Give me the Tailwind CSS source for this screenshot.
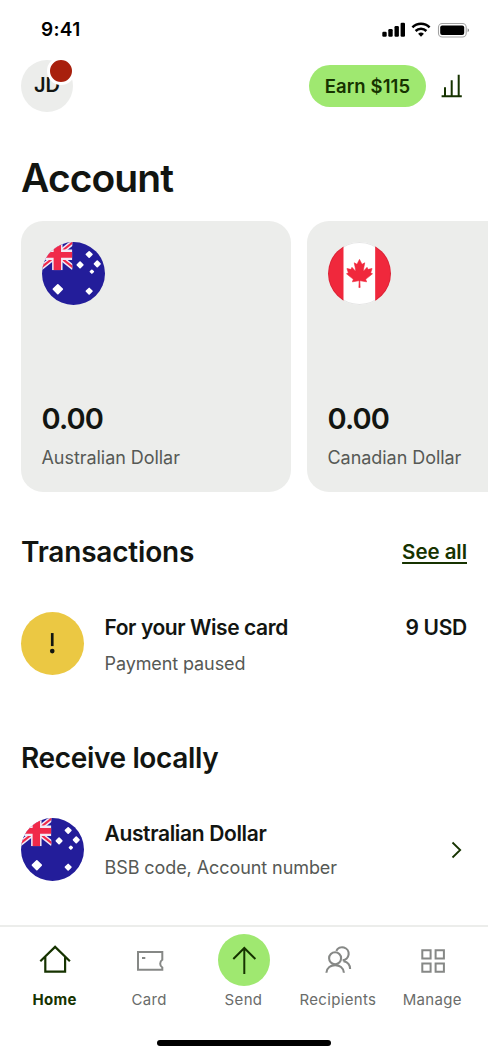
<!DOCTYPE html>
<html lang="en">
<head>
<meta charset="utf-8">
<meta name="viewport" content="width=device-width, initial-scale=1">
<title>Account</title>
<script src="https://cdn.jsdelivr.net/npm/@tailwindcss/browser@4"></script>
</head>
<body class="bg-white">
<svg class="hidden">
  <symbol id="flag-au" viewBox="0 0 187 187">
    <rect width="187" height="187" fill="#231d9a"/>
    <svg width="90" height="84">
      <path d="M-4 77L94-1M-4-1L94 77" stroke="#f3e9f5" stroke-width="15"/>
      <path d="M-4 77L94-1M-4-1L94 77" stroke="#f0294a" stroke-width="6"/>
      <path d="M45.500 0V84M0 38H90" stroke="#f3e9f5" stroke-width="31"/>
      <path d="M0 38H90" stroke="#f0294a" stroke-width="17"/>
      <path d="M45.500 0V84" stroke="#f0294a" stroke-width="22"/>
    </svg>
    <g fill="#fff" stroke="#fff" stroke-width="5" stroke-linejoin="round">
      <path d="M140 29l8 8-8 8-8-8zM164 57l8 8-8 8-8-8zM113 60l8 8-8 8-8-8zM148 84l4 4-4 4-4-4zM47 127l13 13-13 13-13-13zM140 138l8 8-8 8-8-8z"/>
    </g>
  </symbol>
</svg>
<div class="flex h-[1056px] w-[488px] flex-col overflow-hidden bg-white font-['Inter',sans-serif] text-[#121511]">

  <!-- Status bar -->
  <div class="flex h-[60px] shrink-0 items-center justify-between pl-[41px] pr-[19px]">
    <span class="text-[19px] font-semibold leading-6 tracking-[0.3px] text-black">9:41</span>
    <svg class="h-[18px] w-[88px]" viewBox="381 21 88 18" fill="none">
      <g fill="#000">
        <rect x="382.300" y="31.700" width="4.400" height="5" rx="1.200"/>
        <rect x="388.300" y="29" width="4.400" height="7.700" rx="1.200"/>
        <rect x="394.500" y="26" width="4.400" height="10.700" rx="1.200"/>
        <rect x="400.600" y="22.800" width="4.400" height="13.900" rx="1.200"/>
        <path d="M421 36.700l-2.900-2.900a4.200 4.200 0 0 1 5.800 0z"/>
      </g>
      <path d="M412.400 27.300a12.300 12.300 0 0 1 17.200 0M415.600 31a7.800 7.800 0 0 1 10.800 0" stroke="#000" stroke-width="2.500"/>
      <rect x="438.500" y="23.500" width="27.700" height="13.500" rx="3.800" stroke="#a3a3a3" stroke-width="1.100"/>
      <rect x="440.200" y="25.400" width="24" height="9.700" rx="2" fill="#000"/>
      <path d="M467.600 28.200c1.900.6 1.900 3.400 0 4z" fill="#8d8d8d"/>
    </svg>
  </div>

  <!-- Header -->
  <header class="flex h-[52px] shrink-0 items-center pl-[21px] pr-[24px]">
    <div class="relative flex size-[52px] items-center justify-center rounded-full bg-[#ecedeb]">
      <span class="mb-[2px] text-[20px] font-semibold leading-6 text-[#121511]">JD</span>
      <span class="absolute left-[26px] top-[-3px] size-[28px] rounded-full border-[3.500px] border-white bg-[#a8200d]"></span>
    </div>
    <button class="ml-auto flex h-[42px] w-[117px] items-center justify-center rounded-full bg-[#9fe870] text-[18.500px] font-semibold leading-6 tracking-[0.1px] text-[#163300]">Earn $115</button>
    <svg class="ml-[15px] h-[26px] w-[23px]" viewBox="441 73 23 26" fill="none" stroke="#163300" stroke-width="2">
      <path d="M441.600 96.200h20.200M445 87.300v9M451.700 80.300v16M458.700 74.800v21.500"/>
    </svg>
  </header>

  <h1 class="mt-[42px] h-[48px] shrink-0 pl-[21px] text-[39px] font-semibold leading-[48px] tracking-[-0.9px]">Account</h1>

  <!-- Balances -->
  <div class="mt-[19px] flex shrink-0 gap-4 overflow-hidden pl-[21px]">
    <section class="flex h-[271px] w-[270px] shrink-0 flex-col rounded-[22px] bg-[#ecedeb] pl-[20.500px] pt-[20.500px]">
      <svg class="size-[63px] rounded-full"><use href="#flag-au"/></svg>
      <p class="mt-[97px] text-[29px] font-semibold leading-[34px] tracking-[-0.9px]">0.00</p>
      <p class="mt-[10px] text-[18px] leading-6 tracking-[-0.050px] text-[#565955]">Australian Dollar</p>
    </section>
    <section class="flex h-[271px] w-[270px] shrink-0 flex-col rounded-[22px] bg-[#ecedeb] pl-[20.500px] pt-[20.500px]">
      <svg class="size-[63px] rounded-full" viewBox="0 0 187 187">
        <rect width="187" height="187" fill="#fff"/>
        <path d="M0 0h46v187H0zM140 0h47v187h-47z" fill="#f0283c"/>
        <circle cx="93.500" cy="93.500" r="92" fill="none" stroke="#000" stroke-opacity=".1" stroke-width="3"/>
        <path transform="translate(93.500 93) scale(.0207)" fill="#f0283c" stroke="#f0283c" stroke-width="90" d="M-90 2030l45-863a95 95 0 0 0-111-98l-859 151 116-320a65 65 0 0 0-20-73l-941-762 212-99a65 65 0 0 0 34-79l-186-572 542 115a65 65 0 0 0 73-38l105-247 423 454a65 65 0 0 0 111-57l-204-1052 327 189a65 65 0 0 0 91-27l332-652 332 652a65 65 0 0 0 91 27l327-189-204 1052a65 65 0 0 0 111 57l423-454 105 247a65 65 0 0 0 73 38l542-115-186 572a65 65 0 0 0 34 79l212 99-941 762a65 65 0 0 0-20 73l116 320-859-151a95 95 0 0 0-111 98l45 863z"/>
      </svg>
      <p class="mt-[97px] text-[29px] font-semibold leading-[34px] tracking-[-0.9px]">0.00</p>
      <p class="mt-[10px] text-[18px] leading-6 tracking-[-0.050px] text-[#565955]">Canadian Dollar</p>
    </section>
  </div>

  <!-- Transactions -->
  <div class="mt-[40px] flex h-10 shrink-0 items-center justify-between pl-[21px] pr-[21px]">
    <h2 class="text-[28px] font-semibold leading-10 tracking-[-0.2px]">Transactions</h2>
    <a class="text-[20.500px] font-semibold leading-6 tracking-[-0.050px] text-[#163300] underline decoration-2 underline-offset-[3px]">See all</a>
  </div>
  <div class="mt-[40px] flex h-[63px] shrink-0 pl-[21px] pr-[21px]">
    <div class="size-[62.500px] shrink-0 rounded-full bg-[#ebc843]">
      <svg class="size-full" viewBox="0 0 187 187"><path d="M93.500 63v39" stroke="#121511" stroke-width="8"/><circle cx="93.500" cy="117" r="7" fill="#121511"/></svg>
    </div>
    <div class="ml-[21px] flex flex-1 flex-col pt-1">
      <p class="text-[21px] font-semibold leading-6 tracking-[-0.420px]">For your Wise card</p>
      <p class="mt-[12px] text-[18px] leading-6 tracking-[-0.100px] text-[#565955]">Payment paused</p>
    </div>
    <p class="pt-1 text-[21px] font-semibold leading-6 tracking-[-0.300px]">9 USD</p>
  </div>

  <!-- Receive locally -->
  <h2 class="mt-[63px] h-10 shrink-0 pl-[21px] text-[28px] font-semibold leading-10 tracking-[-0.350px]">Receive locally</h2>
  <div class="mt-[40px] flex h-[63px] shrink-0 items-start pl-[21px] pr-[25px]">
    <svg class="size-[63px] shrink-0 rounded-full"><use href="#flag-au"/></svg>
    <div class="ml-[20.500px] flex flex-1 flex-col pt-1">
      <p class="text-[21px] font-semibold leading-6 tracking-[-0.350px]">Australian Dollar</p>
      <p class="mt-[10px] text-[18px] leading-6 tracking-[-0.080px] text-[#565955]">BSB code, Account number</p>
    </div>
    <svg class="mt-[21.500px] h-5 w-3" viewBox="451 839.500 12 20" fill="none" stroke="#163300" stroke-width="1.800"><path d="M452.500 842l7.700 7.500-7.700 7.500"/></svg>
  </div>

  <!-- Tab bar -->
  <nav class="mt-auto flex h-[131px] shrink-0 flex-col items-center border-t-2 border-[#ecedeb] pt-[7px]">
    <div class="grid w-full grid-cols-5 px-2 text-[15px] leading-5 tracking-[0.350px] text-[#6a6c6a]">
      <div class="flex flex-col items-center gap-1 font-bold text-[#163300]">
        <svg class="size-[52px]" viewBox="0 0 52 52" fill="none" stroke="currentColor" stroke-width="2.200"><path d="M11.300 27.200L26.100 12.900L40.900 27.200M16.300 22.500V37.700H36.100V22.500"/></svg>
        <span class="mr-px">Home</span>
      </div>
      <div class="flex flex-col items-center gap-1">
        <svg class="size-[52px]" viewBox="0 0 52 52" fill="none" stroke="#868886" stroke-width="2"><path d="M38.300 18H14V35.700H38.300V33.500C35.500 31.500 35.500 27.800 38.300 25.800ZM18 24.100H21.300"/></svg>
        <span class="mr-px">Card</span>
      </div>
      <div class="flex flex-col items-center gap-1">
        <svg class="size-[52px] rounded-full bg-[#9fe870]" viewBox="0 0 52 52" fill="none" stroke="#163300" stroke-width="2"><path d="M26.300 40V14M15.300 25L26.300 14L37.400 25"/></svg>
        <span class="mr-px">Send</span>
      </div>
      <div class="flex flex-col items-center gap-1">
        <svg class="size-[52px]" viewBox="0 0 52 52" fill="none" stroke="#868886" stroke-width="2.100"><circle cx="23.100" cy="24.300" r="6"/><path d="M24.300 16.900A6.500 6.500 0 1 1 30.600 26.200M14.400 38.700C15 28.600 31.300 28.600 31.900 38.700M31.500 27.200C35.500 28 38.100 31 38.100 35"/></svg>
        <span class="mr-px">Recipients</span>
      </div>
      <div class="flex flex-col items-center gap-1">
        <svg class="size-[52px]" viewBox="0 0 52 52" fill="none" stroke="#868886" stroke-width="2"><path d="M15.300 16.200h8.300v8.300h-8.300zM28.600 16.200h8.300v8.300h-8.300zM15.300 29.400h8.300v8.300h-8.300zM28.600 29.400h8.300v8.300h-8.300z"/></svg>
        <span class="mr-px">Manage</span>
      </div>
    </div>
    <div class="mt-[29.500px] h-[6.500px] w-[174px] rounded-full bg-black"></div>
  </nav>
</div>
</body>
</html>
